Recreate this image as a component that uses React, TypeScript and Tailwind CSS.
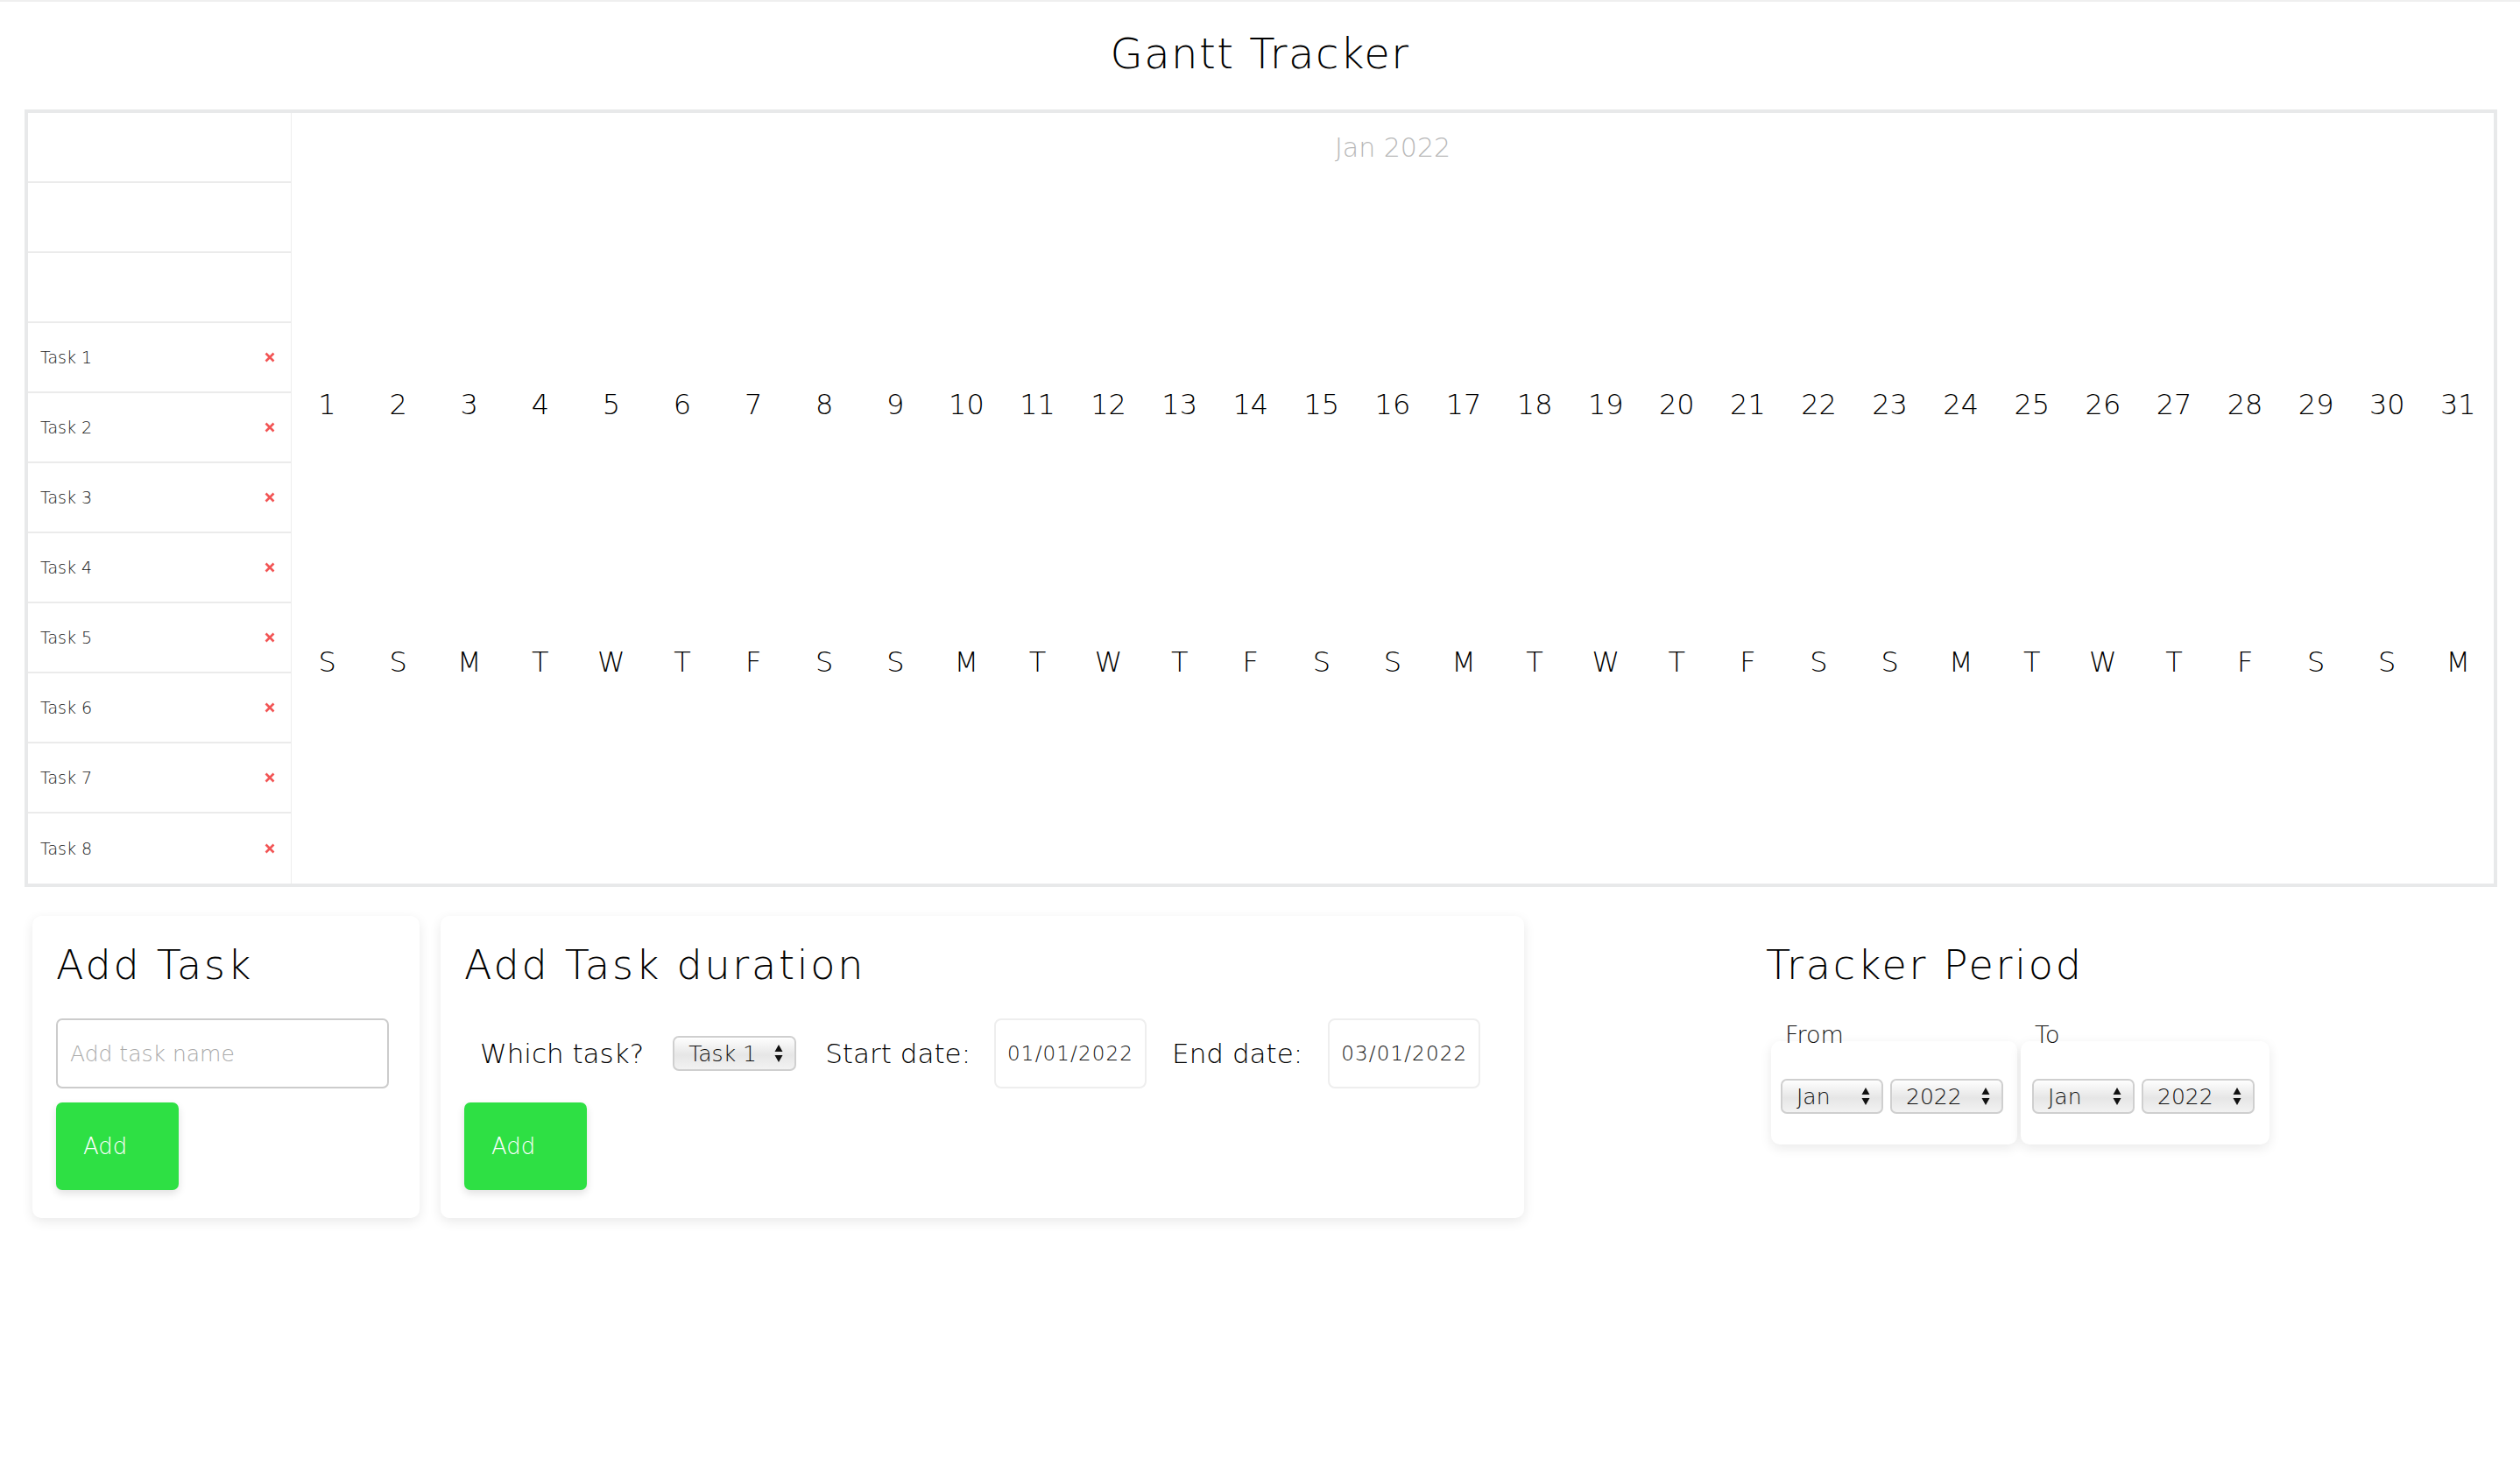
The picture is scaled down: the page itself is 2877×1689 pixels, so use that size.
import React from "react";

const days = Array.from({ length: 31 }, (_, i) => i + 1);
const letters = "SSMTWTFSSMTWTFSSMTWTFSSMTWTFSSM".split("");
const tasks = ["Task 1", "Task 2", "Task 3", "Task 4", "Task 5", "Task 6", "Task 7", "Task 8"];

function Arrows() {
  return (
    <svg width="10" height="22" viewBox="0 0 10 22" className="shrink-0">
      <path d="M5 1 L9.5 9 L0.5 9 Z" fill="#111" />
      <path d="M5 21 L9.5 13 L0.5 13 Z" fill="#111" />
    </svg>
  );
}

function FakeSelect({ label, w }: { label: string; w: string }) {
  return (
    <div
      className={`${w} h-[40px] flex items-center justify-between pl-[16px] pr-[13px] rounded-[7px] border-2 border-[#cfcfcf] bg-[linear-gradient(#fefefe,#e6e6e6_55%,#f2f2f2)] shadow-[inset_0_1px_1px_rgba(255,255,255,0.9)] text-[25px] text-[#111] leading-none`}
    >
      <span>{label}</span>
      <Arrows />
    </div>
  );
}

function XIcon() {
  return (
    <svg width="12" height="12" viewBox="0 0 12 12">
      <path d="M1.5 1.5 L10.5 10.5 M10.5 1.5 L1.5 10.5" stroke="#f25555" strokeWidth="2.6" strokeLinecap="butt" />
    </svg>
  );
}

function GreenButton() {
  return (
    <div className="w-[140px] h-[100px] rounded-[7px] bg-[#2ee044] shadow-[0_4px_10px_rgba(0,0,0,0.12)] flex items-center pl-[31px] text-white text-[26px] leading-none">
      Add
    </div>
  );
}

export default function App() {
  return (
    <div className="w-[2877px] min-h-[1689px] bg-white border-t-2 border-[#efefef] font-['DejaVu_Sans','Inter',sans-serif] font-extralight text-[#111]">
      <div className="h-[123px] flex items-center justify-center">
        <h1 className="text-[48px] leading-none tracking-[0.03em] text-[#000] pb-[6px]">Gantt Tracker</h1>
      </div>

      <div className="ml-[28px] w-[2823px] border-4 border-[#e8e9ea] flex bg-white">
        <div className="w-[301px] border-r border-[#eeeeee] flex flex-col">
          {[0, 1, 2].map((i) => (
            <div key={i} className="h-[80px] border-b-2 border-[#ebebeb]" />
          ))}
          {tasks.map((t, i) => (
            <div
              key={t}
              className={`h-[80px] flex items-center justify-between pl-[14px] pr-[18px] ${i < tasks.length - 1 ? "border-b-2 border-[#ebebeb]" : ""}`}
            >
              <span className="text-[19px] text-[#111] leading-none">{t}</span>
              <XIcon />
            </div>
          ))}
        </div>
        <div className="flex-1 flex flex-col">
          <div className="h-[80px] flex items-center justify-center text-[30px] text-[#b8b8b8] leading-none">
            Jan 2022
          </div>
          <div className="h-[800px] flex flex-col justify-evenly">
            <div className="h-[82px] flex items-center">
              {days.map((d) => (
                <div key={d} className="flex-1 text-center text-[32px] text-[#000] leading-none">
                  {d}
                </div>
              ))}
            </div>
            <div className="h-[82px] flex items-center">
              {letters.map((l, i) => (
                <div key={i} className="flex-1 text-center text-[32px] text-[#000] leading-none">
                  {l}
                </div>
              ))}
            </div>
          </div>
        </div>
      </div>

      <div className="flex items-start mt-[33px]">
        <div className="ml-[37px] w-[442px] h-[345px] rounded-[10px] bg-white shadow-[0_4px_14px_rgba(0,0,0,0.09)] px-[27px] pt-[33px]">
          <h2 className="text-[46px] leading-none text-[#000] tracking-[0.06em]">Add Task</h2>
          <div className="mt-[38px] w-[380px] h-[80px] rounded-[7px] border-2 border-[#cccccc] flex items-center pl-[14px] text-[25px] text-[#aaaaaa] leading-none">
            Add task name
          </div>
          <div className="mt-[16px]">
            <GreenButton />
          </div>
        </div>

        <div className="ml-[24px] w-[1237px] h-[345px] rounded-[10px] bg-white shadow-[0_4px_14px_rgba(0,0,0,0.09)] px-[27px] pt-[33px]">
          <h2 className="text-[46px] leading-none text-[#000] tracking-[0.06em]">Add Task duration</h2>
          <div className="mt-[38px] h-[80px] flex items-center pl-[18px]">
            <span className="text-[31px] leading-none text-[#000]">Which task?</span>
            <div className="ml-[33px]">
              <FakeSelect label="Task 1" w="w-[141px]" />
            </div>
            <span className="ml-[33px] text-[31px] leading-none text-[#000]">Start date:</span>
            <div className="ml-[27px] w-[174px] h-[80px] rounded-[8px] border-2 border-[#eeeeee] flex items-center justify-center text-[23px] tracking-[0.05em] text-[#111] leading-none">
              01/01/2022
            </div>
            <span className="ml-[29px] text-[31px] leading-none text-[#000]">End date:</span>
            <div className="ml-[29px] w-[174px] h-[80px] rounded-[8px] border-2 border-[#eeeeee] flex items-center justify-center text-[23px] tracking-[0.05em] text-[#111] leading-none">
              03/01/2022
            </div>
          </div>
          <div className="mt-[16px]">
            <GreenButton />
          </div>
        </div>

        <div className="ml-[276px] pt-[33px]">
          <h2 className="text-[46px] leading-none text-[#000] tracking-[0.06em]">Tracker Period</h2>
          <div className="mt-[43px] flex items-start ml-[6px]">
            <div className="flex flex-col">
              <span className="ml-[16px] h-[27px] text-[27px] leading-none text-[#111] relative z-10">From</span>
              <div className="-mt-[6px] w-[281px] h-[118px] rounded-[10px] bg-white shadow-[0_4px_14px_rgba(0,0,0,0.09)] pt-[43px] pl-[11px] flex gap-[8px]">
                <FakeSelect label="Jan" w="w-[117px]" />
                <FakeSelect label="2022" w="w-[129px]" />
              </div>
            </div>
            <div className="flex flex-col ml-[4px]">
              <span className="ml-[16px] h-[27px] text-[27px] leading-none text-[#111] relative z-10">To</span>
              <div className="-mt-[6px] w-[284px] h-[118px] rounded-[10px] bg-white shadow-[0_4px_14px_rgba(0,0,0,0.09)] pt-[43px] pl-[13px] flex gap-[8px]">
                <FakeSelect label="Jan" w="w-[117px]" />
                <FakeSelect label="2022" w="w-[129px]" />
              </div>
            </div>
          </div>
        </div>
      </div>
    </div>
  );
}
